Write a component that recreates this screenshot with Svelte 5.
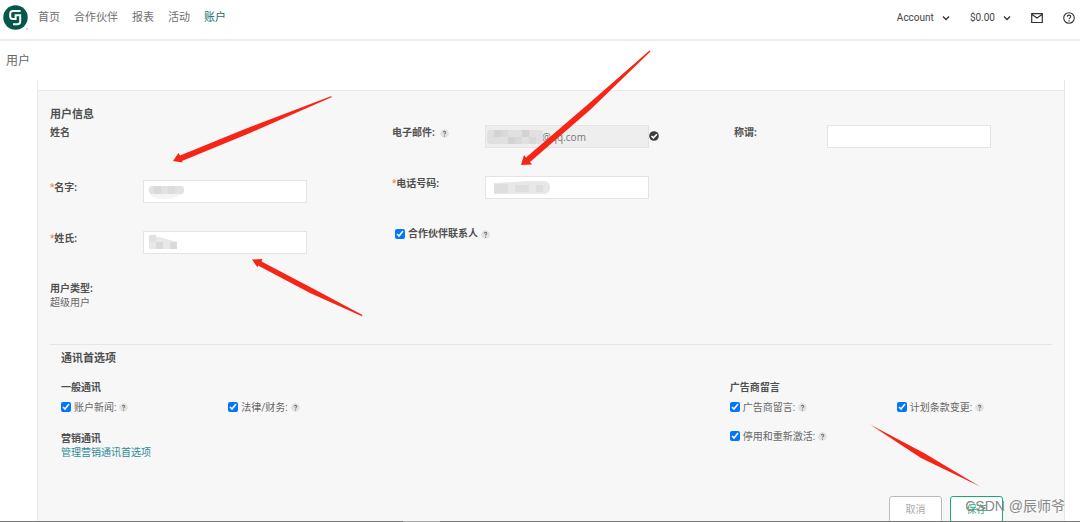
<script lang="ts">
  type Pref = { id: string; label: string; checked: boolean };

  const nav = ['首页', '合作伙伴', '报表', '活动', '账户'];
  const active = '账户';

  let general: Pref[] = $state([
    { id: 'news', label: '账户新闻:', checked: true },
    { id: 'legal', label: '法律/财务:', checked: true },
  ]);
  let advertiser: Pref[] = $state([
    { id: 'messages', label: '广告商留言:', checked: true },
    { id: 'terms', label: '计划条款变更:', checked: true },
    { id: 'reactivate', label: '停用和重新激活:', checked: true },
  ]);
  let partnerContact = $state(true);
</script>

{#snippet help()}
  <svg class="help" viewBox="0 0 10 10" aria-hidden="true">
    <circle cx="5" cy="5" r="4.8" fill="#e2e2e2" />
    <path d="M3.6 3.9C3.7 2.2 6.5 2.3 6.3 4 6.1 4.9 5 4.9 5 6.2" fill="none" stroke="#777" stroke-width="1.2" />
    <circle cx="5" cy="7.8" r="0.7" fill="#777" />
  </svg>
{/snippet}

{#snippet chevron()}
  <svg class="chevron" viewBox="0 0 8 8" aria-hidden="true">
    <path d="M1 2.5 4 5.5 7 2.5" fill="none" stroke="#333" stroke-width="1.3" />
  </svg>
{/snippet}

{#snippet check(pref: Pref)}
  <div class="check">
    <input type="checkbox" id={pref.id} bind:checked={pref.checked} />
    <label for={pref.id}>{pref.label}</label>
    {@render help()}
  </div>
{/snippet}

<div class="page">
  <header>
    <a class="logo" href="#home" aria-label="CJ">
      <svg viewBox="0 0 26 26" aria-hidden="true">
        <circle cx="12.5" cy="12.5" r="12.2" fill="#045849" />
        <path
          d="M17.6 5.9H10Q7.200 5.900 7.200 8.700V11.200Q7.200 14 10 14H12.600V10.200H17.200V16.400Q17.200 19.200 14.400 19.200H10"
          fill="none"
          stroke="#fff"
          stroke-width="2"
        />
        <path d="M23 24H25" stroke="#8eb0a9" />
      </svg>
    </a>
    <nav>
      {#each nav as item}
        <a href="#{item}" class:active={item === active}>{item}</a>
      {/each}
    </nav>
    <div class="tools">
      <button>Account {@render chevron()}</button>
      <button>$0.00 {@render chevron()}</button>
      <button aria-label="Messages">
        <svg class="tool-icon" viewBox="0 0 12 12">
          <path d="M0.700 1.700H11.300V10.500H0.700ZM1 2.500 6 6 11 2.500" fill="none" stroke="#333" stroke-width="1.2" />
        </svg>
      </button>
      <button aria-label="Help">
        <svg class="tool-icon" viewBox="0 0 12 12">
          <circle cx="6" cy="6" r="5.3" fill="none" stroke="#333" stroke-width="1.1" />
          <path d="M4.3 4.8C4.3 2.5 7.8 2.6 7.7 4.7 7.6 5.8 6 5.9 6 7.3" fill="none" stroke="#333" stroke-width="1.1" />
          <circle cx="6" cy="9" r="0.7" fill="#333" />
        </svg>
      </button>
    </div>
  </header>

  <h1>用户</h1>

  <main>
    <form>
      <h2>用户信息</h2>
      <div class="columns">
        <div class="column">
          <div class="row first"><strong>姓名</strong></div>
          <div class="row">
            <label for="given"><span class="required">*</span>名字:</label>
            <div class="field">
              <input id="given" type="text" />
              <svg class="mask" viewBox="0 0 74 20" aria-hidden="true">
                <rect x="5" y="5" width="35" height="8" rx="3" fill="#e2e2e2" />
                <rect x="10" y="5" width="7" height="8" fill="#dadada" />
                <rect x="24" y="5" width="7" height="8" fill="#dcdcdc" />
                <path d="M6 13H38Q32 18 20 18T6 13" fill="#f4f4f4" />
              </svg>
            </div>
          </div>
          <div class="row">
            <label for="family"><span class="required">*</span>姓氏:</label>
            <div class="field">
              <input id="family" type="text" />
              <svg class="mask" viewBox="0 0 74 20" aria-hidden="true">
                <path d="M5 3 19 6 33 10V17H5Z" fill="#e8e8e8" />
                <path d="M5 3H12V10H5Z" fill="#e1e1e1" />
                <path d="M12 10H19V17H12ZM26 10H33V17H26Z" fill="#dadada" />
              </svg>
            </div>
          </div>
          <div class="type">
            <strong>用户类型:</strong>
            <span>超级用户</span>
          </div>
        </div>

        <div class="column">
          <div class="row">
            <label for="email">电子邮件: {@render help()}</label>
            <div class="field">
              <input id="email" type="text" value="@qq.com" disabled />
              <svg class="mask" viewBox="0 0 74 20" aria-hidden="true">
                <rect x="1" y="4" width="56" height="14" rx="3" fill="#e0e0e0" />
                <path d="M8 4H15V11H8ZM22 11H29V18H22ZM36 4H43V11H36Z" fill="#d3d3d3" />
                <path d="M15 4H22V11H15ZM29 11H36V18H29ZM43 11H50V18H43Z" fill="#d9d9d9" />
              </svg>
            </div>
            <svg class="verified" viewBox="0 0 10 10" aria-label="Verified">
              <circle cx="5" cy="5" r="4.8" fill="#3d3d3d" />
              <path d="M2.5 5 4.4 6.9 7.9 3.2" fill="none" stroke="#fff" stroke-width="1.6" />
            </svg>
          </div>
          <div class="row">
            <label for="phone"><span class="required">*</span>电话号码:</label>
            <div class="field">
              <input id="phone" type="text" />
              <svg class="mask" viewBox="0 0 74 20" aria-hidden="true">
                <path d="M8 6 43 4H58Q65 5 64 12 63 17 58 17H8Z" fill="#e8e8e8" />
                <path d="M8 7H22V16H8ZM29 8H43V15H29ZM50 8H57V15H50Z" fill="#dedede" />
              </svg>
            </div>
          </div>
          <div class="check contact">
            <input type="checkbox" id="contact" bind:checked={partnerContact} />
            <label for="contact">合作伙伴联系人</label>
            {@render help()}
          </div>
        </div>

        <div class="column">
          <div class="row">
            <label for="title">称谓:</label>
            <div class="field"><input id="title" type="text" /></div>
          </div>
        </div>
      </div>

      <section>
        <h2>通讯首选项</h2>
        <div class="prefs">
          <div class="general">
            <h3>一般通讯</h3>
            <div class="checks">
              {#each general as pref}
                {@render check(pref)}
              {/each}
            </div>
            <h3>营销通讯</h3>
            <a href="#marketing">管理营销通讯首选项</a>
          </div>
          <div class="advertiser">
            <h3>广告商留言</h3>
            <div class="checks">
              {#each advertiser as pref}
                {@render check(pref)}
              {/each}
            </div>
          </div>
        </div>
      </section>

      <div class="actions">
        <button type="button">取消</button>
        <button type="button" class="save">保存</button>
      </div>
    </form>
  </main>

  <div class="edge"><span></span></div>

  <svg class="arrows" viewBox="0 0 1080 522" aria-hidden="true">
    <g fill="#f52618">
      <path d="M331.5 96 331.5 97.200 250 133 182 161 182.500 162.500 173 161 178.500 153 180 155.500 245 129Z" />
      <path d="M649.500 50.500 650.500 51.500 590 110 530 162 532 164.500 521 165 524 155 526 157.500 586 106Z" />
      <path d="M362.500 315 362 316.200 310 293 258 265.500 257.500 267.500 252 259.500 262.500 259 261.500 261.500 312 288Z" />
      <path d="M870 424.500 924 453 980 486.500 921 458Z" />
    </g>
  </svg>
  <span class="watermark">CSDN @辰师爷</span>
</div>

<style>
  :global(body) {
    background: #fff;
  }

  .page {
    position: relative;
    display: flex;
    flex-direction: column;
    height: 100vh;
    overflow: hidden;
    color: #666;
    font-family: Roboto, 'Noto Sans CJK SC', sans-serif;
    font-size: 10px;
    line-height: 14px;
  }

  h1,
  h2,
  h3 {
    margin: 0;
  }

  a {
    color: #2b8c9b;
    text-decoration: none;
  }

  svg {
    display: block;
    flex-shrink: 0;
  }

  header {
    display: flex;
    align-items: center;
    height: 36px;
    padding: 0 5px 3px 3px;
    border-bottom: 2px solid #ebeeee;
  }

  .logo svg {
    width: 26px;
    height: 26px;
  }

  nav {
    display: flex;
    gap: 14px;
    margin-left: 9px;
    font-size: 11px;
  }

  nav a {
    color: #707070;
  }

  nav a.active {
    color: #21706f;
  }

  .tools {
    display: flex;
    align-items: center;
    gap: 20px;
    margin-left: auto;
  }

  .tools button {
    display: flex;
    align-items: center;
    gap: 8px;
    padding: 0;
    border: 0;
    background: none;
    color: #444;
    font: inherit;
  }

  .chevron {
    width: 8px;
    height: 8px;
  }

  .tool-icon {
    width: 12px;
    height: 12px;
  }

  h1 {
    padding: 11px 6px 10px;
    font-size: 12px;
    font-weight: 400;
    line-height: 18px;
  }

  main {
    flex: 1;
    min-height: 0;
    margin: 0 15px 0 37px;
    padding-top: 10px;
    border: solid #e9e9e9;
    border-width: 0 1px;
  }

  form {
    padding: 16px 0 0 12px;
    border-top: 1px solid #e9e9e9;
    background: #f7f7f7;
  }

  h2 {
    color: #505050;
    font-size: 11px;
    font-weight: 700;
    line-height: 16px;
  }

  .columns {
    display: grid;
    grid-template-columns: 342fr 342fr 330fr;
    padding-top: 2px;
  }

  .row {
    display: grid;
    grid-template-columns: 93px 164px auto;
    justify-content: start;
    height: 51px;
    line-height: 16px;
  }

  .row.first {
    height: 55px;
  }

  .row label,
  strong,
  .contact label {
    color: #505050;
    font-weight: 700;
  }

  .row label {
    display: flex;
    align-items: center;
    height: 16px;
  }

  .row label .help {
    margin-left: 5px;
  }

  .required {
    color: #f08030;
    font-weight: 400;
  }

  .field {
    position: relative;
    height: 23px;
  }

  .field input {
    box-sizing: border-box;
    width: 100%;
    height: 23px;
    padding: 0 6px;
    border: 1px solid #e4e4e4;
    background: #fff;
    font: inherit;
  }

  .field input:disabled {
    padding-left: 56px;
    background: #eee;
    color: #777;
    font-family: 'Open Sans', sans-serif;
  }

  .mask {
    position: absolute;
    top: 1px;
    left: 1px;
    width: 74px;
    height: 20px;
  }

  .help {
    width: 9px;
    height: 9px;
  }

  .verified {
    width: 10px;
    height: 10px;
    margin-top: 6px;
  }

  .type {
    display: flex;
    flex-direction: column;
    height: 62px;
  }

  .check {
    display: flex;
    align-items: center;
    height: 14px;
  }

  .check input {
    width: 10px;
    height: 10px;
    margin: 0 3px 0 0;
    accent-color: #0075ff;
  }

  .check label {
    padding-top: 2px;
  }

  .check .help {
    margin-left: 3px;
  }

  .contact {
    padding-left: 3px;
  }

  .contact label {
    padding-top: 0;
  }

  section {
    margin-right: 12px;
    padding: 5px 0 0 11px;
    border-top: 1px solid #e5e5e5;
  }

  section h2 {
    padding-top: 1px;
  }

  .prefs {
    display: grid;
    grid-template-columns: 2fr 1fr;
    margin-right: -12px;
    padding-top: 14px;
  }

  h3 {
    color: #505050;
    font-size: 10px;
    font-weight: 700;
    line-height: 14px;
  }

  .checks {
    display: grid;
    grid-template-columns: 1fr 1fr;
    row-gap: 15px;
    padding: 5px 0 18px;
  }

  .general .checks {
    grid-template-columns: repeat(4, 1fr);
  }

  .actions {
    display: flex;
    justify-content: flex-end;
    gap: 8px;
    padding: 35px 61px 12px 0;
  }

  .actions button {
    width: 53px;
    height: 27px;
    border: 1px solid #bbb;
    border-radius: 3px;
    background: #fff;
    color: #aaa;
    font: inherit;
  }

  .actions .save {
    border-color: #1ca874;
    color: #1ca874;
  }

  .edge {
    position: relative;
    height: 1px;
    background: #777;
  }

  .edge span {
    display: block;
    width: 37px;
    height: 1px;
    margin-left: 403px;
    background: #aaa;
  }

  .arrows {
    position: absolute;
    inset: 0;
    width: 100%;
    height: 100%;
    pointer-events: none;
  }

  .watermark {
    position: absolute;
    right: 15px;
    bottom: 6px;
    color: #888;
    font-family: 'Liberation Sans', 'Noto Sans CJK SC', sans-serif;
    font-size: 14px;
    line-height: 20px;
  }
</style>
